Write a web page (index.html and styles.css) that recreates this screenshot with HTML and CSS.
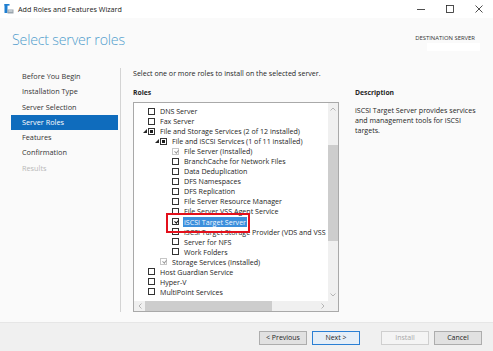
FILE: index.html
```html
<!DOCTYPE html>
<html>
<head>
<meta charset="utf-8">
<link rel="stylesheet" href="styles.css">
</head>
<body>
<div class="window">
  <div class="titlebar">
    <svg class="app-icon" width="10" height="10" viewBox="0 0 10 10">
      <rect x="0.5" y="0" width="3" height="9" fill="#1f7fd1"/>
      <rect x="0.5" y="0" width="5" height="1.6" fill="#1f7fd1"/>
      <path d="M3.5 5.5 L9.5 5.5 L9.5 9.5 L3.5 9.5 Z" fill="#9aa5ad"/>
      <path d="M4.5 6.5 L8.5 6.5 L8.5 7.5 L4.5 7.5 Z" fill="#e8eef2"/>
    </svg>
    <span class="title">Add Roles and Features Wizard</span>
    <div class="controls">
      <svg class="ctl" width="10" height="10" viewBox="0 0 10 10"><path d="M1 5.5 H9" stroke="#222" stroke-width="0.8"/></svg>
      <svg class="ctl" width="10" height="10" viewBox="0 0 10 10"><rect x="1.5" y="1.5" width="7" height="7" fill="none" stroke="#222" stroke-width="0.8"/></svg>
      <svg class="ctl" width="10" height="10" viewBox="0 0 10 10"><path d="M1.5 1.5 L8.5 8.5 M8.5 1.5 L1.5 8.5" stroke="#222" stroke-width="0.8"/></svg>
    </div>
  </div>

  <div class="main">
    <div class="header">
      <h1 class="heading">Select server roles</h1>
      <div class="dest">
        <div class="dest-label">DESTINATION SERVER</div>
        <div class="dest-name"></div>
      </div>
    </div>

    <div class="body">
      <nav class="nav">
        <div class="nav-item">Before You Begin</div>
        <div class="nav-item">Installation Type</div>
        <div class="nav-item">Server Selection</div>
        <div class="nav-item active">Server Roles</div>
        <div class="nav-item">Features</div>
        <div class="nav-item">Confirmation</div>
        <div class="nav-item disabled">Results</div>
      </nav>

      <div class="content">
        <p class="intro">Select one or more roles to install on the selected server.</p>
        <div class="columns">
          <div class="roles">
            <div class="label">Roles</div>
            <div class="listbox">
              <div class="list-view">
                <div class="row l0"><span class="exp"></span><span class="cb"></span><span class="txt">DNS Server</span></div>
                <div class="row l0"><span class="exp"></span><span class="cb"></span><span class="txt">Fax Server</span></div>
                <div class="row l0"><span class="exp open"></span><span class="cb partial"></span><span class="txt">File and Storage Services (2 of 12 installed)</span></div>
                <div class="row l1"><span class="exp open"></span><span class="cb partial"></span><span class="txt">File and iSCSI Services (1 of 11 installed)</span></div>
                <div class="row l2"><span class="exp"></span><span class="cb dis-checked"></span><span class="txt">File Server (Installed)</span></div>
                <div class="row l2"><span class="exp"></span><span class="cb"></span><span class="txt">BranchCache for Network Files</span></div>
                <div class="row l2"><span class="exp"></span><span class="cb"></span><span class="txt">Data Deduplication</span></div>
                <div class="row l2"><span class="exp"></span><span class="cb"></span><span class="txt">DFS Namespaces</span></div>
                <div class="row l2"><span class="exp"></span><span class="cb"></span><span class="txt">DFS Replication</span></div>
                <div class="row l2"><span class="exp"></span><span class="cb"></span><span class="txt">File Server Resource Manager</span></div>
                <div class="row l2"><span class="exp"></span><span class="cb"></span><span class="txt">File Server VSS Agent Service</span></div>
                <div class="row l2"><span class="exp"></span><span class="cb checked"></span><span class="txt sel">iSCSI Target Server</span></div>
                <div class="row l2"><span class="exp"></span><span class="cb"></span><span class="txt">iSCSI Target Storage Provider (VDS and VSS</span></div>
                <div class="row l2"><span class="exp"></span><span class="cb"></span><span class="txt">Server for NFS</span></div>
                <div class="row l2"><span class="exp"></span><span class="cb"></span><span class="txt">Work Folders</span></div>
                <div class="row l1"><span class="exp"></span><span class="cb dis-checked"></span><span class="txt">Storage Services (Installed)</span></div>
                <div class="row l0"><span class="exp"></span><span class="cb"></span><span class="txt">Host Guardian Service</span></div>
                <div class="row l0"><span class="exp"></span><span class="cb"></span><span class="txt">Hyper-V</span></div>
                <div class="row l0"><span class="exp"></span><span class="cb"></span><span class="txt">MultiPoint Services</span></div>
              </div>
              <div class="vscroll">
                <span class="arrow">
                  <svg width="6" height="4" viewBox="0 0 6 4"><path d="M0.5 3.5 L3 1 L5.5 3.5" fill="none" stroke="#a6a6a6" stroke-width="0.8"/></svg>
                </span>
                <div class="vtrack"><div class="vthumb"></div></div>
                <span class="arrow">
                  <svg width="6" height="4" viewBox="0 0 6 4"><path d="M0.5 0.5 L3 3 L5.5 0.5" fill="none" stroke="#a6a6a6" stroke-width="0.8"/></svg>
                </span>
              </div>
              <div class="hscroll">
                <span class="arrow">
                  <svg width="4" height="6" viewBox="0 0 4 6"><path d="M3.5 0.5 L1 3 L3.5 5.5" fill="none" stroke="#a6a6a6" stroke-width="0.8"/></svg>
                </span>
                <div class="htrack"><div class="hthumb"></div></div>
                <span class="arrow">
                  <svg width="4" height="6" viewBox="0 0 4 6"><path d="M0.5 0.5 L3 3 L0.5 5.5" fill="none" stroke="#a6a6a6" stroke-width="0.8"/></svg>
                </span>
              </div>
              <div class="corner"></div>
              <div class="annot"></div>
            </div>
          </div>
          <div class="desc">
            <div class="label">Description</div>
            <p class="desc-text">iSCSI Target Server provides services and management tools for iSCSI targets.</p>
          </div>
        </div>
      </div>
    </div>
  </div>

  <div class="footer">
    <button class="btn">&lt; Previous</button>
    <button class="btn primary">Next &gt;</button>
    <button class="btn disabled gap">Install</button>
    <button class="btn">Cancel</button>
  </div>
</div>
</body>
</html>
```
FILE: styles.css
```css
* { box-sizing: border-box; }
html, body { margin: 0; padding: 0; }
body {
  width: 493px;
  height: 351px;
  overflow: hidden;
  font-family: "Open Sans", "Noto Sans", "Liberation Sans", sans-serif;
  color: #1e1e1e;
  background: #fafafa;
}
.window {
  width: 493px;
  height: 351px;
  display: flex;
  flex-direction: column;
}

/* title bar */
.titlebar {
  height: 18px;
  flex: none;
  background: #ffffff;
  display: flex;
  align-items: center;
  padding-left: 4px;
}
.app-icon { display: block; flex: none; }
.title {
  margin-left: 4px;
  font-size: 7.2px;
  color: #1a1a1a;
}
.controls {
  margin-left: auto;
  display: flex;
  align-items: center;
  gap: 19px;
  padding-right: 9px;
}
.ctl { display: block; }

/* main area */
.main {
  flex: 1;
  background: #fafafa;
  display: flex;
  flex-direction: column;
  border-bottom: 1px solid #e6e6e6;
}
.header {
  height: 50px;
  flex: none;
  display: flex;
  justify-content: space-between;
  padding: 12px 13px 0 12px;
}
.heading {
  margin: 0;
  font-size: 14.2px;
  line-height: 20px;
  font-weight: 300;
  color: #4f9ccc;
  letter-spacing: -0.2px;
}
.dest {
  display: flex;
  flex-direction: column;
  align-items: flex-end;
  padding-top: 3px;
}
.dest-label {
  font-size: 5.9px;
  line-height: 10px;
  color: #333;
  padding-right: 5px;
}
.dest-name {
  width: 53px;
  height: 8px;
  background: #ffffff;
}

.body {
  flex: 1;
  display: flex;
  padding-bottom: 10px;
}
.nav {
  flex: none;
  margin-left: 11px;
  width: 110px;
  border-right: 1px solid #d4d4d4;
  padding-top: 1px;
  padding-right: 2px;
}
.nav-item {
  height: 15.3px;
  line-height: 15.3px;
  padding-left: 11px;
  font-size: 7.3px;
  color: #333333;
}
.nav-item.active {
  background: #0f6cbd;
  color: #ffffff;
}
.nav-item.disabled { color: #b8b8b8; }

.content {
  flex: 1;
  padding-left: 12px;
  display: flex;
  flex-direction: column;
}
.intro {
  margin: 0;
  font-size: 7.1px;
  line-height: 10px;
  color: #262626;
}
.columns {
  flex: 1;
  display: flex;
  margin-top: 10px;
}
.roles {
  width: 206px;
  flex: none;
  display: flex;
  flex-direction: column;
}
.label {
  font-size: 6.8px;
  line-height: 10px;
  font-weight: 700;
  color: #262626;
}
.listbox {
  position: relative;
  margin-top: 4px;
  flex: 1;
  background: #ffffff;
  border: 1px solid #a9a9a9;
  display: grid;
  grid-template-columns: 1fr 10px;
  grid-template-rows: 1fr 10px;
}
.list-view {
  overflow: hidden;
  padding-top: 3px;
}
.row {
  height: 10.05px;
  display: flex;
  align-items: center;
  white-space: nowrap;
  font-size: 7.1px;
  color: #1e1e1e;
}
.row.l0 { padding-left: 8px; }
.row.l1 { padding-left: 20px; }
.row.l2 { padding-left: 32px; }
.exp {
  width: 6px;
  height: 6px;
  flex: none;
  position: relative;
}
.exp.open::before {
  content: "";
  position: absolute;
  left: 0.5px;
  top: 1px;
  border-style: solid;
  border-width: 0 0 4px 4px;
  border-color: transparent transparent #262626 transparent;
}
.cb {
  width: 7px;
  height: 7px;
  flex: none;
  border: 1px solid #333333;
  background: #ffffff;
  position: relative;
}
.cb.partial::after {
  content: "";
  position: absolute;
  left: 1px;
  top: 1px;
  width: 3px;
  height: 3px;
  background: #1a1a1a;
}
.cb.checked::after,
.cb.dis-checked::after {
  content: "";
  position: absolute;
  left: 1.8px;
  top: 0px;
  width: 1.6px;
  height: 3.4px;
  border-right: 1px solid #111;
  border-bottom: 1px solid #111;
  transform: rotate(40deg);
}
.cb.dis-checked { border-color: #c6c6c6; }
.cb.dis-checked::after { border-color: #9a9a9a; }
.txt {
  margin-left: 5px;
  line-height: 10px;
}
.txt.sel {
  background: #3c8fdc;
  color: #f2f7ff;
  padding: 0 1px;
  margin-left: 4px;
}
.vscroll {
  grid-column: 2;
  grid-row: 1;
  background: #f0f0f0;
  display: flex;
  flex-direction: column;
  align-items: center;
}
.vscroll .arrow {
  height: 12px;
  display: flex;
  align-items: center;
  justify-content: center;
  flex: none;
}
.vtrack {
  flex: 1;
  width: 100%;
  padding-top: 30px;
  padding-bottom: 48px;
}
.vthumb {
  width: 100%;
  height: 100%;
  background: #cdcdcd;
}
.hscroll {
  grid-column: 1;
  grid-row: 2;
  background: #f0f0f0;
  display: flex;
  align-items: center;
}
.hscroll .arrow {
  width: 11px;
  display: flex;
  justify-content: center;
  align-items: center;
  flex: none;
}
.htrack {
  flex: 1;
  height: 100%;
  padding-right: 45px;
}
.hthumb {
  height: 100%;
  background: #cdcdcd;
}
.corner {
  grid-column: 2;
  grid-row: 2;
  background: #f0f0f0;
}
.annot {
  position: absolute;
  left: 32px;
  top: 110px;
  width: 84px;
  height: 20px;
  border: 2.5px solid #e3101c;
  pointer-events: none;
}

.desc {
  margin-left: 16px;
  width: 128px;
}
.desc-text {
  margin: 7px 0 0 0;
  font-size: 7.1px;
  line-height: 10px;
  color: #262626;
}

/* footer */
.footer {
  height: 28px;
  flex: none;
  background: #f0f0f0;
  display: flex;
  justify-content: flex-end;
  align-items: flex-start;
  padding-top: 8px;
  padding-right: 11px;
  gap: 5px;
}
.btn {
  width: 48px;
  height: 14px;
  padding: 0;
  margin: 0;
  font-family: "Open Sans", "Noto Sans", sans-serif;
  font-size: 7px;
  line-height: 12px;
  color: #1e1e1e;
  background: #e1e1e1;
  border: 1px solid #adadad;
  border-radius: 0;
}
.btn.primary {
  border-color: #2a7fd4;
  background: #e5eef7;
}
.btn.disabled {
  color: #a8a8a8;
  background: #f4f4f4;
  border-color: #cfcfcf;
}
.btn.gap { margin-left: 16px; }
```
